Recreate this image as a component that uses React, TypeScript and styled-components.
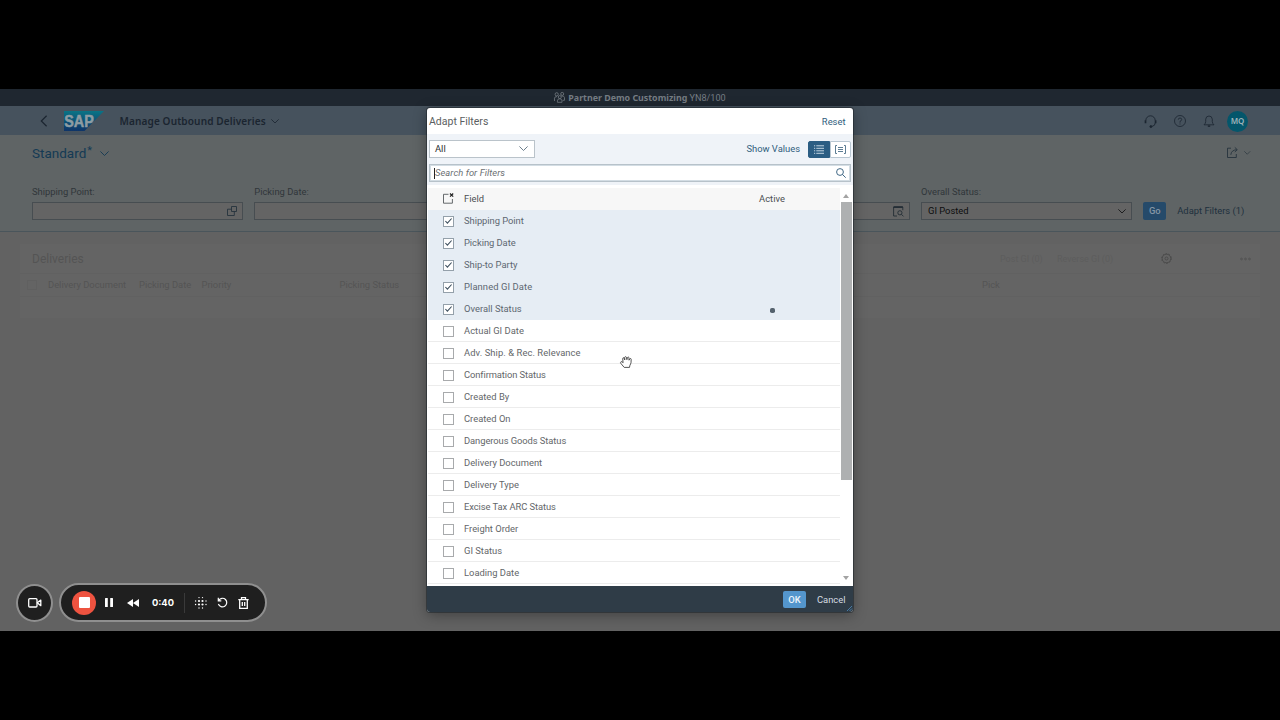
import React from 'react';
import styled, { createGlobalStyle, css } from 'styled-components';

const Global = createGlobalStyle`
  body { margin: 0; background: #000; }
  *, *::before, *::after { box-sizing: border-box; }
  svg { display: block; flex: none; overflow: visible; }
`;

const Stage = styled.div`
  position: relative;
  width: 1280px;
  height: 720px;
  padding: 89px 0;
  overflow: hidden;
  background: #000;
  font-family: Roboto, 'Noto Sans', sans-serif;
  font-size: 9.4px;
  line-height: 12px;
  white-space: nowrap;
`;
const Page = styled.div`
  height: 542px;
  display: flex;
  flex-direction: column;
  background: #626262;
  color: #2b3035;
`;
const Banner = styled.div`
  height: 17px;
  display: flex;
  align-items: center;
  justify-content: center;
  gap: 3px;
  background: #1f2730;
  color: #757c83;
  font-size: 9.1px;
  b { font-family: 'Noto Sans', sans-serif; font-size: 8.85px; font-weight: 700; }
`;
const Shell = styled.header`
  height: 29px;
  display: flex;
  align-items: center;
  padding: 1px 32px 0 40px;
  background: #46525d;
  color: #1b2530;
`;
const Logo = styled.svg`margin-left: 15px;`;
const AppTitle = styled.div`
  margin: 0 5px 0 15.5px;
  font: 600 10.05px/14px 'Noto Sans', sans-serif;
  letter-spacing: 0.12px;
`;
const ShellTools = styled.div`
  margin-left: auto;
  display: flex;
  align-items: center;
  gap: 17px;
`;
const Avatar = styled.div`
  width: 21px;
  height: 21px;
  margin-left: -5px;
  border-radius: 50%;
  display: grid;
  place-items: center;
  background: #04566b;
  color: #9fb4bb;
  font: 600 8px/10px 'Noto Sans', sans-serif;
`;
const FilterBar = styled.section`
  height: 97px;
  padding: 7px 30px 0 32px;
  background: #5f6465;
  border-bottom: 1px solid #4a555b;
`;
const VariantRow = styled.div`
  height: 21px;
  display: flex;
  align-items: center;
  justify-content: space-between;
  color: #143a54;
`;
const Variant = styled.div`
  display: flex;
  align-items: center;
  gap: 8px;
  font-size: 13.5px;
  line-height: 18px;
  svg { margin-top: 3px; }
`;
const Star = styled.span`
  margin: -3px 0 0 -7px;
  font-size: 11px;
`;
const Share = styled.div`
  display: flex;
  align-items: center;
  gap: 6px;
  color: #26333d;
`;
const Filters = styled.div`
  margin-top: 22px;
  display: flex;
  align-items: flex-end;
  gap: 11px;
`;
const FilterItem = styled.div`width: 211.25px;`;
const Label = styled.div`
  height: 17px;
  color: #30363a;
  line-height: 13px;
`;
const Input = styled.div`
  height: 18px;
  display: flex;
  align-items: center;
  justify-content: space-between;
  padding: 0 5px 0 6px;
  border: 1px solid #474d51;
  background: #646464;
  color: #0c0d0e;
`;
const Go = styled.div`
  width: 23px;
  height: 18px;
  display: grid;
  place-items: center;
  border-radius: 2px;
  background: #254a6a;
  color: #8596a5;
  font-weight: 500;
`;
const AdaptLink = styled.div`
  line-height: 18px;
  color: #20303d;
`;
const Table = styled.section`
  width: 1240px;
  height: 74px;
  margin: 12px 20px 0;
  background: #646464;
  color: #545454;
`;
const TableBar = styled.div`
  height: 30px;
  display: flex;
  align-items: center;
  justify-content: space-between;
  padding: 0 9px 0 12px;
  font-size: 12px;
  border-bottom: 1px solid #616161;
`;
const TableTools = styled.div`
  display: flex;
  align-items: center;
  font-size: 9px;
  color: #5d5d5d;
  svg { color: #4a4a4a; }
`;
const Tool = styled.span<{ $w: number }>`width: ${p => p.$w}px;`;
const TableHead = styled.div`
  height: 23px;
  display: flex;
  align-items: center;
  padding-left: 7px;
  border-bottom: 1px solid #616161;
`;
const Col = styled.span<{ $w: number }>`
  width: ${p => p.$w}px;
  flex: none;
`;
const GhostBox = styled.i`
  width: 10px;
  height: 10px;
  margin-right: 11px;
  border: 1px solid #606060;
`;

const Dialog = styled.div`
  position: absolute;
  left: 427px;
  top: 108px;
  width: 426px;
  height: 504px;
  display: flex;
  flex-direction: column;
  border-radius: 3px;
  overflow: hidden;
  background: #fff;
  box-shadow: 0 0 0 1px rgba(30, 36, 42, 0.55), 0 3px 14px rgba(0, 0, 0, 0.35);
  color: #5b5e61;
`;
const DialogHead = styled.div`
  height: 26px;
  display: flex;
  align-items: center;
  justify-content: space-between;
  padding: 1px 7.5px 0 2px;
  font-size: 10.5px;
`;
const Link = styled.span`
  color: #2f5d7d;
  font-size: 9.4px;
`;
const Controls = styled.div`
  height: 51px;
  padding: 5px 2px 0 2px;
  background: #eff3f8;
`;
const ControlRow = styled.div`
  height: 19px;
  display: flex;
  align-items: center;
  justify-content: space-between;
`;
const Select = styled.div`
  width: 106px;
  height: 18px;
  display: flex;
  align-items: center;
  justify-content: space-between;
  margin-top: 1px;
  padding: 0 6px 0 5px;
  border: 1px solid #bac3ca;
  background: #fff;
  color: #2a2d30;
  svg { color: #5c7080; }
`;
const ViewTools = styled.div`
  display: flex;
  align-items: center;
  gap: 8px;
  margin-top: 1px;
`;
const Segments = styled.div`
  display: flex;
`;
const segmentOn = css`background: #2b5d83; border-color: #2b5d83; color: #d5e2ec; border-radius: 2px 0 0 2px;`;
const Segment = styled.div<{ $on?: boolean }>`
  width: 21.5px;
  height: 17px;
  display: grid;
  place-items: center;
  border: 1px solid #b9c7d2;
  border-radius: 0 2px 2px 0;
  background: #fff;
  color: #4c6f88;
  ${p => p.$on && segmentOn}
`;
const Search = styled.div`
  height: 18px;
  margin-top: 6px;
  display: flex;
  align-items: center;
  padding: 0 3px 0 2px;
  border: 2px solid #d3dde4;
  background: #fff;
  outline: 1px solid #b7c2ca;
  outline-offset: -1px;
  color: #6b6f73;
  font-style: italic;
  svg { margin-left: auto; color: #2c5878; }
`;
const Caret = styled.i`
  width: 1px;
  height: 11px;
  margin-left: 1px;
  background: #222;
`;
const Placeholder = styled.span`letter-spacing: 0.06px;`;
const ListWrap = styled.div`
  height: 401px;
  padding: 3px 1px 0 1px;
  display: flex;
  background: #fff;
`;
const List = styled.div`
  flex: 1;
  overflow: hidden;
`;
const ListHead = styled.div`
  height: 22px;
  display: flex;
  align-items: center;
  padding: 0 0 1px 14.500px;
  background: #f7f7f7;
  color: #4c4f52;
`;
const Row = styled.div<{ $on: boolean }>`
  height: 22px;
  display: flex;
  align-items: center;
  padding: 1px 0 0 14.500px;
  background: ${p => (p.$on ? '#e6edf4' : '#fff')};
  border-bottom: 1px solid ${p => (p.$on ? '#e6edf4' : '#ececec')};
  color: ${p => (p.$on ? '#5d6771' : '#636669')};
`;
const Check = styled.i<{ $on: boolean }>`
  width: 11px;
  height: 11px;
  display: grid;
  place-items: center;
  border: 1px solid ${p => (p.$on ? '#94a0aa' : '#a8aaac')};
  background: #fff;
  color: #3d4f5e;
`;
const IconCell = styled.span`width: 21.500px; flex: none;`;
const FieldName = styled.span<{ $ls?: number }>`
  width: 308px;
  letter-spacing: ${p => p.$ls ?? 0}px;
`;
const ActiveCell = styled.span`
  width: 0;
  display: flex;
  justify-content: center;
`;
const Dot = styled.i`
  flex: none;
  width: 5px;
  height: 5px;
  margin-top: 2px;
  border-radius: 1.8px;
  background: #55626d;
`;
const Scroll = styled.div`
  width: 12px;
  display: flex;
  flex-direction: column;
  align-items: center;
  padding: 6px 0 6px;
  color: #a3a3a3;
`;
const Thumb = styled.div`
  width: 11px;
  height: 278px;
  margin: 4px 0 auto 1px;
  background: #aeb0b1;
`;
const Footer = styled.div`
  flex: 1;
  display: flex;
  align-items: center;
  justify-content: flex-end;
  gap: 11px;
  padding: 1px 7.5px 0 0;
  background: #2f3c47;
  color: #d5dbe0;
`;
const Ok = styled.div`
  width: 23px;
  height: 17px;
  display: grid;
  place-items: center;
  border-radius: 2px;
  background: #5496cd;
  color: #eef5fa;
  font-weight: 500;
`;
const Grip = styled.svg`
  position: absolute;
  right: 1px;
  bottom: 1px;
`;
const Hand = styled.svg`
  position: absolute;
  left: 619.5px;
  top: 355.5px;
`;
const Recorder = styled.div`
  position: absolute;
  left: 16px;
  top: 583px;
  display: flex;
  align-items: center;
  gap: 6px;
`;
const CamButton = styled.div`
  width: 37px;
  height: 38px;
  display: grid;
  place-items: center;
  border: 2px solid #8f8f8f;
  border-radius: 50%;
  background: #1f1f1f;
  color: #fff;
`;
const Bar = styled.div`
  width: 208px;
  height: 39px;
  display: flex;
  align-items: center;
  padding-left: 11px;
  border: 2px solid #8f8f8f;
  border-radius: 20px;
  background: #1f1f1f;
  color: #fff;
`;
const Stop = styled.div`
  width: 24px;
  height: 24px;
  display: grid;
  place-items: center;
  margin-right: 9px;
  border-radius: 50%;
  background: #ee5340;
  &::after { content: ''; width: 11px; height: 11px; border-radius: 1px; background: #fff; }
`;
const Time = styled.div`
  width: 22px;
  margin: 0 10px 0 13px;
  font: 700 9.3px/12px Inter, sans-serif;
`;
const Divider = styled.i`
  width: 1px;
  height: 20px;
  margin-right: 10px;
  background: #3a3a3a;
`;
const BarIcon = styled.span<{ $gap: number }>`margin-right: ${p => p.$gap}px;`;

const Chevron = ({ w = 9 }: { w?: number }) => (
  <svg width={w} height={w * 0.56} viewBox="0 0 9 5" fill="none" stroke="currentColor" strokeWidth="0.9"><path d="M.4.4 4.5 4.5 8.6.4" /></svg>
);
const ValueHelp = () => (
  <svg width="10" height="10" viewBox="0 0 10 10" fill="none" stroke="#26333d" strokeWidth="0.9"><path d="M4.5.5h5v5h-5zM4.5 3.2h-4v6.3h6.8V5.5" /></svg>
);
const DateHelp = () => (
  <svg width="11" height="11" viewBox="0 0 11 11" fill="none" stroke="#222c34" strokeWidth="0.9"><path d="M4 10H.6V1h9.2v3.2" /><path d="M.6 1.1h9.2" strokeWidth="1.6" /><circle cx="6.9" cy="6.8" r="2.1" /><path d="m8.5 8.4 2 2" /></svg>
);
const Group = () => (
  <svg width="11" height="11" viewBox="0 0 11 11" fill="none" stroke="currentColor" strokeWidth="0.8"><circle cx="2.7" cy="2.3" r="1.6" /><circle cx="8.2" cy="1.9" r="1.5" /><circle cx="5.8" cy="5.1" r="1.5" /><path d="M3.4 10.3V8.9q0-2.1 2.3-2.1T8 8.9v1.4zM.5 9V6.2Q.8 4.3 3 4.6M7.4 4q2.8-.5 3.1 1.7v2.6H8.6" /></svg>
);

const fields: [string, boolean, number?][] = [
  ['Shipping Point', true, -0.04], ['Picking Date', true, -0.05], ['Ship-to Party', true], ['Planned GI Date', true, 0.1],
  ['Overall Status', true], ['Actual GI Date', false, 0.03], ['Adv. Ship. & Rec. Relevance', false, 0.08],
  ['Confirmation Status', false, -0.1], ['Created By', false], ['Created On', false], ['Dangerous Goods Status', false, -0.07],
  ['Delivery Document', false], ['Delivery Type', false], ['Excise Tax ARC Status', false, -0.07],
  ['Freight Order', false], ['GI Status', false], ['Loading Date', false],
];

export default function App() {
  return (
    <Stage>
      <Global />
      <Page>
        <Banner><Group /><span><b>Partner Demo Customizing</b> YN8/100</span></Banner>
        <Shell>
          <svg width="9" height="12" viewBox="0 0 9 12" fill="none" stroke="currentColor" strokeWidth="1.2"><path d="M6.600 .8 1.300 6l5.300 5.200" /></svg>
          <Logo width="40" height="20" viewBox="0 0 40 20">
            <defs><linearGradient id="sap" x1="0" y1="0" x2="0" y2="1"><stop offset="0" stopColor="#0a7486" /><stop offset="1" stopColor="#0f3468" /></linearGradient></defs>
            <path d="M0 0h40L20.500 20H0z" fill="url(#sap)" />
            <text x="0.300" y="15.500" textLength="29.500" lengthAdjust="spacingAndGlyphs" fontFamily="Liberation Sans, sans-serif" fontWeight="700" fontSize="16" fill="#8d9ca3" stroke="#8d9ca3" strokeWidth=".5">SAP</text>
          </Logo>
          <AppTitle>Manage Outbound Deliveries</AppTitle>
          <Chevron w={8} />
          <ShellTools>
            <svg width="13" height="13" viewBox="0 0 13 13" fill="none" stroke="currentColor" strokeWidth="0.9"><path d="M1.800 5.500a4.700 4.700 0 0 1 9.400 0M11.300 7.800q0 3-3.500 3.700" /><path d="M1.500 5.200v3M11.600 5.200v3" strokeWidth="1.700" /><circle cx="6.900" cy="11.600" r="1" fill="currentColor" /></svg>
            <svg width="12" height="12" viewBox="0 0 12 12" fill="none" stroke="currentColor" strokeWidth="0.800"><circle cx="6" cy="6" r="5.500" /><path d="M4.300 4.700q0-1.700 1.700-1.700t1.700 1.500Q7.700 5.600 6 6.400v1.200M6 8.500v1" /></svg>
            <svg width="12" height="12" viewBox="0 0 12 12" fill="none" stroke="currentColor" strokeWidth="0.800"><path d="M1 9.800q1.700-1.300 1.700-3.300V4.200Q3 1 6 1t3.300 3.200v2.300q0 2 1.700 3.300z" /><path d="M4.800 11.100h2.400" strokeWidth="1.400" /></svg>
            <Avatar>MQ</Avatar>
          </ShellTools>
        </Shell>
        <FilterBar>
          <VariantRow>
            <Variant><span>Standard</span><Star>*</Star><Chevron /></Variant>
            <Share>
              <svg width="11" height="11" viewBox="0 0 11 11" fill="none" stroke="currentColor" strokeWidth="0.900"><path d="M4 1.200H.5v9.300h8.800V7M3.800 7.800Q4.300 3 9.800 2.700M7.800.4l2.500 2.300-2.500 2.300" /></svg>
              <Chevron w={6.500} />
            </Share>
          </VariantRow>
          <Filters>
            <FilterItem><Label>Shipping Point:</Label><Input><span /><ValueHelp /></Input></FilterItem>
            <FilterItem><Label>Picking Date:</Label><Input /></FilterItem>
            <FilterItem><Label /><Input /></FilterItem>
            <FilterItem><Label /><Input><span /><DateHelp /></Input></FilterItem>
            <FilterItem><Label>Overall Status:</Label><Input><span>GI Posted</span><Chevron w={8} /></Input></FilterItem>
            <Go>Go</Go>
            <AdaptLink>Adapt Filters (1)</AdaptLink>
          </Filters>
        </FilterBar>
        <Table>
          <TableBar>
            <span>Deliveries</span>
            <TableTools>
              <Tool $w={57}>Post GI (0)</Tool><Tool $w={104}>Reverse GI (0)</Tool>
              <svg width="11" height="11" viewBox="0 0 11 11" fill="none" stroke="currentColor" strokeWidth="0.900"><circle cx="5.500" cy="5.500" r="4.300" /><circle cx="5.500" cy="5.500" r="4.900" strokeDasharray="1.500 1.580" /><circle cx="5.500" cy="5.500" r="1.500" /></svg>
              <Tool $w={68} />
              <svg width="11" height="4" viewBox="0 0 11 4" fill="none" stroke="currentColor" strokeWidth="0.700"><circle cx="1.500" cy="2" r="0.900" /><circle cx="5.500" cy="2" r="0.900" /><circle cx="9.500" cy="2" r="0.900" /></svg>
            </TableTools>
          </TableBar>
          <TableHead>
            <GhostBox /><Col $w={91}>Delivery Document</Col><Col $w={62.500}>Picking Date</Col><Col $w={138}>Priority</Col><Col $w={642.500}>Picking Status</Col><Col $w={30}>Pick</Col>
          </TableHead>
        </Table>
      </Page>

      <Dialog>
        <DialogHead><span>Adapt Filters</span><Link>Reset</Link></DialogHead>
        <Controls>
          <ControlRow>
            <Select><span>All</span><Chevron /></Select>
            <ViewTools>
              <Link>Show Values</Link>
              <Segments>
                <Segment $on><svg width="10" height="9" viewBox="0 0 10 9" stroke="currentColor" strokeWidth="0.900"><path d="M0 .8h1.200M2.300.8H10M0 3.300h1.200M2.300 3.300H10M0 5.800h1.200M2.300 5.800H10M0 8.300h1.200M2.300 8.300H10" /></svg></Segment>
                <Segment><svg width="11" height="9" viewBox="0 0 11 9" fill="none" stroke="currentColor" strokeWidth="0.900"><path d="M2 .5H.5v8H2M9 .5h1.500v8H9M3 2.500h5M3 4.500h5M3 6.500h5" /></svg></Segment>
              </Segments>
            </ViewTools>
          </ControlRow>
          <Search>
            <Caret /><Placeholder>Search for Filters</Placeholder>
            <svg width="10" height="10" viewBox="0 0 10 10" fill="none" stroke="currentColor" strokeWidth="0.900"><circle cx="4" cy="4" r="3.400" /><path d="m6.500 6.500 3.200 3.200" /></svg>
          </Search>
        </Controls>
        <ListWrap>
          <List>
            <ListHead>
              <IconCell><svg width="11" height="11" viewBox="0 0 11 11" fill="none" stroke="#55595c" strokeWidth="0.900"><path d="M5.500 1.300H.5v8.900h8.900V6" /><path d="m7 .5 3.200 3.200M10.200.5 7 3.700" stroke="#222" strokeWidth="1.200" /></svg></IconCell>
              <FieldName>Field</FieldName>
              <ActiveCell>Active</ActiveCell>
            </ListHead>
            {fields.map(([name, on, ls]) => (
              <Row key={name} $on={on}>
                <IconCell><Check $on={on}>{on && <svg width="7" height="6" viewBox="0 0 7 6" fill="none" stroke="currentColor" strokeWidth="1.100"><path d="m.4 3 2 2.200L6.600.5" /></svg>}</Check></IconCell>
                <FieldName $ls={ls}>{name}</FieldName>
                <ActiveCell>{name === 'Overall Status' && <Dot />}</ActiveCell>
              </Row>
            ))}
          </List>
          <Scroll>
            <svg width="6" height="4" viewBox="0 0 6 4" fill="currentColor"><path d="M0 4 3 0l3 4z" /></svg>
            <Thumb />
            <svg width="6" height="4" viewBox="0 0 6 4" fill="currentColor"><path d="M0 0h6L3 4z" /></svg>
          </Scroll>
        </ListWrap>
        <Footer>
          <Ok>OK</Ok><span>Cancel</span>
          <Grip width="5" height="5" viewBox="0 0 5 5" stroke="#5496cd" strokeWidth="0.700"><path d="M0 5 5 0M2.500 5 5 2.500" /></Grip>
        </Footer>
      </Dialog>

      <Hand width="13" height="12" viewBox="0 0 13 12" fill="#fff" stroke="#444" strokeWidth="0.900" strokeLinejoin="round">
        <path d="M4.200 11.400 1 7.600Q0 6 1.200 5.600q.9-.1 1.900 1.200L2.700 2.600q.1-1.200 1.200-.8L4.800 4 4.700 1.200Q5.500 0 6.400 1.200L6.900 3.700 7.400 1.500q.9-1 1.600.1v2.600l.8-1.400q1.200-.8 1.400.5.300 3.900-1.400 6.400l-.3 1.700z" />
      </Hand>

      <Recorder>
        <CamButton>
          <svg width="14" height="10" viewBox="0 0 14 10" fill="none" stroke="currentColor" strokeWidth="1.300" strokeLinejoin="round"><rect x=".7" y=".7" width="8.300" height="8.300" rx="1" /><path d="m9.300 4.800 3.500-2.700v5.600z" /></svg>
        </CamButton>
        <Bar>
          <Stop />
          <BarIcon $gap={14}><svg width="8" height="9" viewBox="0 0 8 9" fill="currentColor"><rect width="2.800" height="9" rx=".5" /><rect x="5.200" width="2.800" height="9" rx=".5" /></svg></BarIcon>
          <svg width="12" height="8" viewBox="0 0 12 8" fill="currentColor"><path d="M6 0v8L0 4zM12 0v8L6 4z" /></svg>
          <Time>0:40</Time>
          <Divider />
          <BarIcon $gap={10}>
            <svg width="12" height="12" viewBox="0 0 12 12" fill="currentColor">
              {[[4, 0.6], [7.500, 0.6], [0.600, 4], [4, 4], [7.500, 4], [11, 4], [0.600, 7.500], [4, 7.500], [7.500, 7.500], [11, 7.500], [4, 11], [7.500, 11]].map(([x, y]) => <circle key={`${x}-${y}`} cx={x} cy={y} r={x > 3 && x < 8 && y > 3 && y < 8 ? 1.100 : 0.700} />)}
            </svg>
          </BarIcon>
          <BarIcon $gap={10}><svg width="11" height="11" viewBox="0 0 11 11" fill="none" stroke="currentColor" strokeWidth="1.200"><path d="M1.800 3.300A4.300 4.300 0 1 1 1.400 7M1.300.8v3h3" /></svg></BarIcon>
          <svg width="11" height="12" viewBox="0 0 11 12" fill="none" stroke="currentColor" strokeWidth="1.300"><path d="M.3 2.600h10.400M3.500 2.400V.7h4v1.700M1.700 2.800v8.500h7.600V2.800M4.300 5v4M6.700 5v4" /></svg>
        </Bar>
      </Recorder>
    </Stage>
  );
}
